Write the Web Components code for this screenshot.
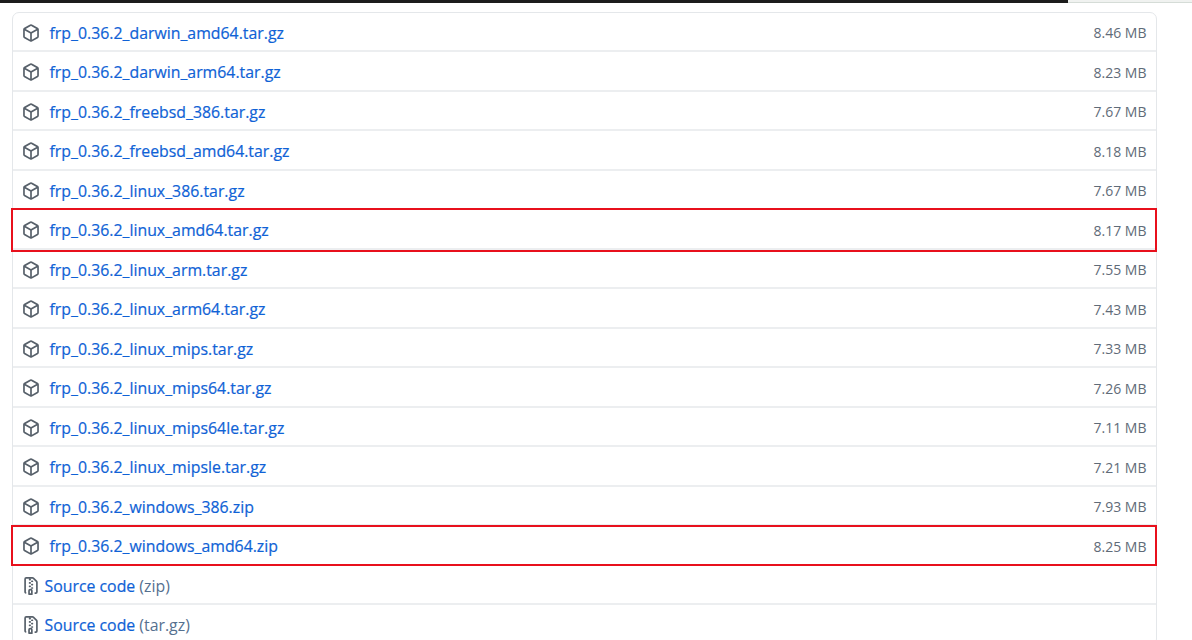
<!DOCTYPE html>
<html>
<head>
<meta charset="utf-8">
<style>
  html, body { margin: 0; padding: 0; background: #fff; height: 640px; overflow: hidden; }
  body { font-family: "Open Sans", "Noto Sans", sans-serif; }
</style>
</head>
<body>
<top-strip></top-strip>
<asset-list>
  <asset-row name="frp_0.36.2_darwin_amd64.tar.gz" size="8.46 MB"></asset-row>
  <asset-row name="frp_0.36.2_darwin_arm64.tar.gz" size="8.23 MB"></asset-row>
  <asset-row name="frp_0.36.2_freebsd_386.tar.gz" size="7.67 MB"></asset-row>
  <asset-row name="frp_0.36.2_freebsd_amd64.tar.gz" size="8.18 MB"></asset-row>
  <asset-row name="frp_0.36.2_linux_386.tar.gz" size="7.67 MB"></asset-row>
  <asset-row name="frp_0.36.2_linux_amd64.tar.gz" size="8.17 MB" marked style="--mark-top:-2px;--mark-bottom:-4px"></asset-row>
  <asset-row name="frp_0.36.2_linux_arm.tar.gz" size="7.55 MB"></asset-row>
  <asset-row name="frp_0.36.2_linux_arm64.tar.gz" size="7.43 MB"></asset-row>
  <asset-row name="frp_0.36.2_linux_mips.tar.gz" size="7.33 MB"></asset-row>
  <asset-row name="frp_0.36.2_linux_mips64.tar.gz" size="7.26 MB"></asset-row>
  <asset-row name="frp_0.36.2_linux_mips64le.tar.gz" size="7.11 MB"></asset-row>
  <asset-row name="frp_0.36.2_linux_mipsle.tar.gz" size="7.21 MB"></asset-row>
  <asset-row name="frp_0.36.2_windows_386.zip" size="7.93 MB"></asset-row>
  <asset-row name="frp_0.36.2_windows_amd64.zip" size="8.25 MB" marked style="--mark-top:-1px;--mark-bottom:-2px"></asset-row>
  <source-row kind="zip"></source-row>
  <source-row kind="tar.gz"></source-row>
</asset-list>

<script>
const boxIcon = `<svg width="18" height="18" viewBox="0 0 16 16" fill="#57606a"><path fill-rule="evenodd" d="M8.878.392a1.75 1.75 0 00-1.756 0l-5.25 3.045A1.75 1.75 0 001 4.951v6.098c0 .624.332 1.2.872 1.514l5.25 3.045a1.75 1.75 0 001.756 0l5.25-3.045c.54-.313.872-.89.872-1.514V4.951c0-.624-.332-1.2-.872-1.514L8.878.392zM7.875 1.69a.25.25 0 01.25 0l4.63 2.685L8 7.133 3.245 4.375l4.63-2.685zM2.5 5.677v5.372c0 .09.047.171.125.216l4.625 2.683V8.432L2.5 5.677zm6.25 8.271l4.625-2.683a.25.25 0 00.125-.216V5.677L8.75 8.432v5.516z"/></svg>`;
const zipIcon = `<svg width="18" height="18" viewBox="0 0 16 16" fill="#57606a"><path fill-rule="evenodd" d="M3.5 1.75a.25.25 0 01.25-.25h3a.75.75 0 000 1.5h.5a.75.75 0 000-1.5h2.086a.25.25 0 01.177.073l2.914 2.914a.25.25 0 01.073.177v8.586a.25.25 0 01-.25.25h-.5a.75.75 0 000 1.5h.5A1.75 1.75 0 0014 13.25V4.664c0-.464-.184-.909-.513-1.237L10.573.513A1.75 1.75 0 009.336 0H3.75A1.75 1.75 0 002 1.75v11.5c0 .649.353 1.214.874 1.515a.75.75 0 10.752-1.298.25.25 0 01-.126-.217V1.75zM8.75 3a.75.75 0 000 1.5h.5a.75.75 0 000-1.5h-.5zM6 5.25a.75.75 0 01.75-.75h.5a.75.75 0 010 1.5h-.5A.75.75 0 016 5.25zm2 1.5A.75.75 0 018.75 6h.5a.75.75 0 010 1.5h-.5A.75.75 0 018 6.75zm-1.25.75a.75.75 0 000 1.5h.5a.75.75 0 000-1.5h-.5zM8 9.75A.75.75 0 018.75 9h.5a.75.75 0 010 1.5h-.5A.75.75 0 018 9.75zm-.75.75a1.75 1.75 0 00-1.75 1.75v3c0 .414.336.75.75.75h2.5a.75.75 0 00.75-.75v-3a1.75 1.75 0 00-1.75-1.75h-.5zM7 12.25a.25.25 0 01.25-.25h.5a.25.25 0 01.25.25v2.25H7v-2.25z"/></svg>`;

class TopStrip extends HTMLElement {
  constructor() {
    super();
    this.attachShadow({ mode: "open" }).innerHTML = `
      <style>
        :host { display: flex; height: 3px; }
        .dark { flex: 0 0 1068px; background: #1c1c1c; }
        .rest { flex: 1; background: #f0f2f0; border-bottom: 1px solid #d5dcd7; box-sizing: border-box; }
      </style>
      <div class="dark"></div><div class="rest"></div>`;
  }
}

class AssetList extends HTMLElement {
  constructor() {
    super();
    this.attachShadow({ mode: "open" }).innerHTML = `
      <style>
        :host {
          display: block;
          box-sizing: border-box;
          width: 1145px;
          margin: 8.5px 0 0 11.5px;
          border: 1px solid #e4e7ea;
          border-radius: 7px;
        }
      </style>
      <slot></slot>`;
  }
}

class AssetRow extends HTMLElement {
  constructor() {
    super();
    const marked = this.hasAttribute("marked");
    this.attachShadow({ mode: "open" }).innerHTML = `
      <style>
        :host {
          display: flex;
          position: relative;
          align-items: center;
          justify-content: space-between;
          box-sizing: border-box;
          height: 39.5px;
          padding: 2.5px 9px 0 9px;
          border-bottom: 2px solid #eceef0;
          font-size: 15.85px;
        }
        .name { display: flex; align-items: center; gap: 10px; color: #0f62d6; -webkit-text-stroke: 0.2px #0f62d6; }
        svg { display: block; }
        .size { color: #5f6b78; font-size: 14px; }
        .mark {
          position: absolute;
          left: -2px; right: -1px;
          top: var(--mark-top, 0); bottom: var(--mark-bottom, 0);
          border: 2px solid #e8101c;
          pointer-events: none;
        }
      </style>
      <span class="name">${boxIcon}<span>${this.getAttribute("name")}</span></span>
      <span class="size">${this.getAttribute("size")}</span>
      ${marked ? '<div class="mark"></div>' : ""}`;
  }
}

class SourceRow extends HTMLElement {
  constructor() {
    super();
    this.attachShadow({ mode: "open" }).innerHTML = `
      <style>
        :host {
          display: flex;
          align-items: center;
          gap: 5px;
          box-sizing: border-box;
          height: 39.5px;
          padding: 2.5px 0 0 9px;
          border-bottom: 2px solid #eceef0;
          font-size: 15.85px;
          color: #0f62d6;
        }
        svg { display: block; }
        .label { -webkit-text-stroke: 0.2px #0f62d6; }
        .kind { color: #55708f; -webkit-text-stroke: 0; }
      </style>
      ${zipIcon}<span class="label">Source code <span class="kind">(${this.getAttribute("kind")})</span></span>`;
  }
}

customElements.define("top-strip", TopStrip);
customElements.define("asset-list", AssetList);
customElements.define("asset-row", AssetRow);
customElements.define("source-row", SourceRow);
</script>
</body>
</html>
